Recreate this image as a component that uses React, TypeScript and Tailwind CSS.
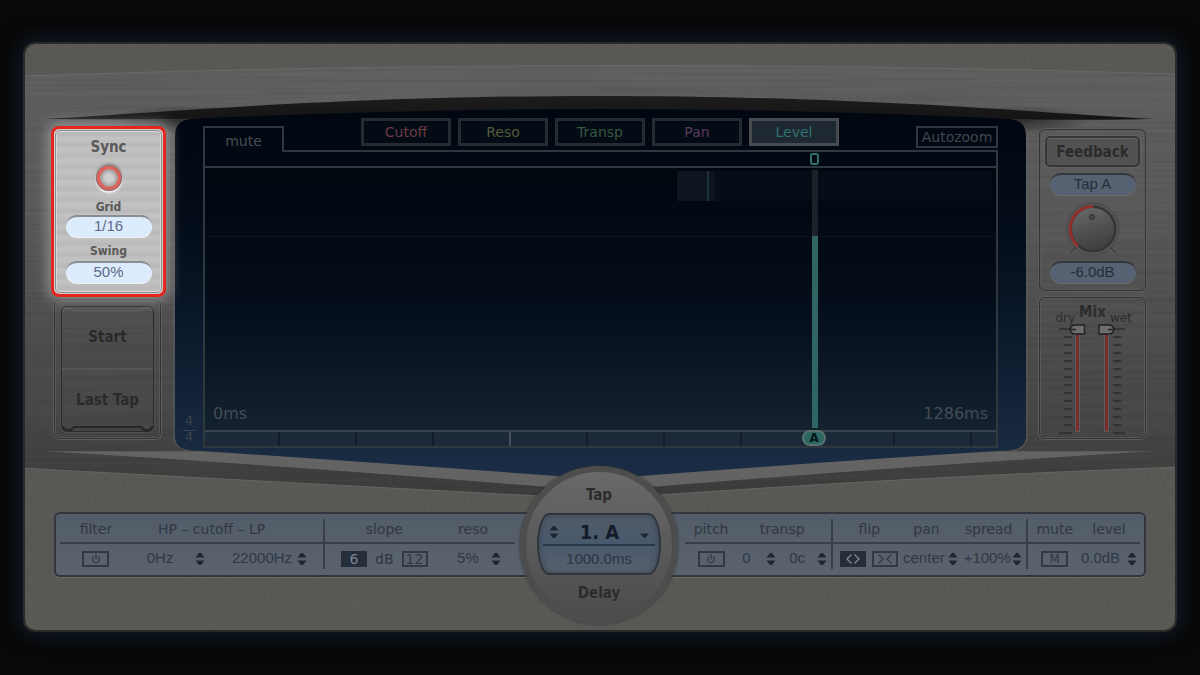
import { useState } from 'react'
import type { ReactNode } from 'react'
import clsx from 'clsx'

const tabs = [
  { name: 'Cutoff', color: 'text-[#6b3c42]' },
  { name: 'Reso', color: 'text-[#555a3a]' },
  { name: 'Transp', color: 'text-[#34573f]' },
  { name: 'Pan', color: 'text-[#5c3a5c]' },
  { name: 'Level', color: 'text-[#2f716e]' },
]

const beats = [0, 1, 2, 3, 4, 5, 6, 7, 8, 9]
const sliderTicks = Array.from({ length: 14 }, (_, i) => 6 + i * 8)

const labelFont = "font-['DejaVu_Sans_Condensed','DejaVu_Sans',sans-serif] font-bold"
const lcdFont = "font-['DejaVu_Sans',sans-serif]"
const valueFont = "font-['Liberation_Sans',sans-serif] font-normal"

/* Stone, brushed metal and the curved screen opening */
function Casing() {
  return (
    <svg
      className="absolute inset-0 w-full h-full"
      viewBox="25 44 1150 587"
      preserveAspectRatio="none"
      aria-hidden="true"
    >
      <defs>
        <linearGradient id="metal" x1="0" y1="0" x2="0" y2="1">
          <stop offset="0" stopColor="#626262" />
          <stop offset="0.12" stopColor="#5f5f5f" />
          <stop offset="0.35" stopColor="#5b5b5b" />
          <stop offset="0.62" stopColor="#4f4f4f" />
          <stop offset="0.8" stopColor="#494949" />
          <stop offset="0.9" stopColor="#424243" />
          <stop offset="1" stopColor="#3c3c3d" />
        </linearGradient>
        <linearGradient id="screen" x1="0" y1="0" x2="0" y2="1">
          <stop offset="0" stopColor="#010710" />
          <stop offset="0.3" stopColor="#030c18" />
          <stop offset="0.6" stopColor="#0b192b" />
          <stop offset="0.9" stopColor="#18293f" />
          <stop offset="1" stopColor="#1b2d46" />
        </linearGradient>
        <linearGradient id="arch" x1="0" y1="0" x2="0" y2="1">
          <stop offset="0" stopColor="#1d1d1d" />
          <stop offset="1" stopColor="#141414" />
        </linearGradient>
        <radialGradient id="shade">
          <stop offset="0" stopColor="#000" stopOpacity="0.5" />
          <stop offset="1" stopColor="#000" stopOpacity="0" />
        </radialGradient>
        <filter id="grain" x="0" y="0" width="1" height="1">
          <feTurbulence type="fractalNoise" baseFrequency="0.3" numOctaves="2" seed="4" />
          <feColorMatrix values="0 0 0 0 0  0 0 0 0 0  0 0 0 0 0  1 0 0 0 -0.3" />
        </filter>
        <filter id="brushed" x="0" y="0" width="1" height="1">
          <feTurbulence type="fractalNoise" baseFrequency="0.004 0.3" numOctaves="2" seed="9" />
          <feColorMatrix values="0 0 0 0 0  0 0 0 0 0  0 0 0 0 0  1.5 0 0 0 -0.5" />
        </filter>
        <clipPath id="metalClip">
          <path d="M25,76 Q600,56 1175,74 V468 Q900,478 600,500 Q300,484 25,469 Z" />
        </clipPath>
      </defs>
      <rect x="25" y="44" width="1150" height="587" fill="#5b5a57" />
      <rect x="25" y="44" width="1150" height="587" filter="url(#grain)" opacity="0.08" />
      <g clipPath="url(#metalClip)">
        <rect x="25" y="56" width="1150" height="450" fill="url(#metal)" />
        <rect x="25" y="56" width="1150" height="450" filter="url(#brushed)" opacity="0.1" />
        <ellipse cx="180" cy="120" rx="70" ry="14" fill="url(#shade)" />
        <ellipse cx="1021" cy="120" rx="70" ry="14" fill="url(#shade)" />
      </g>
      <path d="M25,76 Q600,56 1175,74" fill="none" stroke="#696969" />
      <path d="M25,469 Q300,484 600,500 Q900,478 1175,468" fill="none" stroke="#65645f" />
      <path
        d="M46,119 C150,114 330,96 600,96 C870,96 1050,114 1153,119 Q1100,121 1010,119 H190 Q90,120 46,119 Z"
        fill="url(#arch)"
      />
      <path d="M46,452 H1153 Q900,467 600,492 Q300,467 46,452 Z" fill="#636363" />
      <path
        d="M175,136 Q175,120 192,119 Q400,109 600,109 Q800,109 1009,119 Q1026,120 1026,136 V438 Q1025,450 1010,451 Q800,464 600,480 Q400,465 190,451 Q176,450 175,438 Z"
        fill="url(#screen)"
      />
      <path
        d="M174,136 V438 Q175,450 190,452 M1027,136 V438 Q1026,450 1010,452"
        fill="none"
        stroke="#6a6a6a"
        strokeOpacity="0.6"
      />
    </svg>
  )
}

function Pill({ children, lit }: { children: ReactNode; lit?: boolean }) {
  return (
    <div
      className={clsx(
        'w-[86px] h-[22px] pb-0.5 rounded-full overflow-hidden border-t-2 flex items-center justify-center',
        lit
          ? 'bg-[#dcecfd] border-[#8b8d94] text-[#5d6a86] shadow-[0_1px_0_#f2f2f2]'
          : 'bg-[#566171] border-[#34373c] text-[#262e3c] shadow-[0_1px_0_#6c6c6c]'
      )}
    >
      {children}
    </div>
  )
}

const pillField = clsx(
  valueFont,
  'w-full h-5 shrink-0 bg-transparent text-center text-[15px] leading-5 appearance-none outline-none [text-align-last:center]'
)

function Stepper() {
  return (
    <svg className="w-[10px] h-[14px] shrink-0" viewBox="0 0 10 14" fill="#1f2632" aria-hidden="true">
      <path d="M0.5 5.5 L4 1 H6 L9.5 5.5 Z M0.5 8.5 H9.5 L6 13 H4 Z" />
    </svg>
  )
}

function PowerButton({ label }: { label: string }) {
  return (
    <button aria-label={label} className="w-[27px] h-4 border-2 border-[#303946] flex items-center justify-center">
      <svg className="w-[10px] h-[10px]" viewBox="0 0 10 10" fill="none" stroke="#303946" strokeWidth="1.2" aria-hidden="true">
        <path d="M3 2.6 A3.4 3.4 0 1 0 7 2.6 M5 0 V5.5" />
      </svg>
    </button>
  )
}

function Head({ children, className, htmlFor }: { children: ReactNode; className?: string; htmlFor?: string }) {
  return (
    <div
      className={clsx(
        'h-[25px] pb-0.5 border-b-2 border-[#373f4b] flex items-center justify-center text-sm leading-4 whitespace-pre text-[#303742]',
        lcdFont,
        className
      )}
    >
      {htmlFor ? <label htmlFor={htmlFor}>{children}</label> : <span>{children}</span>}
    </div>
  )
}

function Cell({ children, className }: { children: ReactNode; className?: string }) {
  return <div className={clsx('h-[25px] pt-1.5 flex items-center justify-center', className)}>{children}</div>
}

function Value({ id, value, className, label }: { id?: string; value: string; className: string; label?: string }) {
  return (
    <input
      id={id}
      aria-label={label}
      defaultValue={value}
      className={clsx('h-5 bg-transparent pb-[3px] text-[15px] leading-4 text-[#303846] outline-none', valueFont, className)}
    />
  )
}

const divider = 'border-l-2 border-l-[#373f4b]'
const lcdBar =
  'flex-1 min-w-0 h-[65px] pt-[5px] mb-0.5 bg-linear-to-b from-[#535d69] to-[#5a636d] border-y-2 border-[#33373d] shadow-[0_1px_0_#6a6965]'

function FilterBar() {
  return (
    <div className={clsx(lcdBar, 'rounded-l-md border-l-2 pl-1 pr-[25px]')}>
      <div className="grid grid-cols-[72fr_88fr_104fr_120fr_72fr]">
        <Head>filter</Head>
        <Head className="col-span-2 pr-8">HP – cutoff – LP</Head>
        <Head className={divider}>slope</Head>
        <Head className="pr-3" htmlFor="reso">reso</Head>
        <Cell><PowerButton label="filter" /></Cell>
        <Cell className="gap-5">
          <Value label="HP cutoff" value="0Hz" className="w-7" />
          <Stepper />
        </Cell>
        <Cell className="gap-1 pr-1">
          <Value label="LP cutoff" value="22000Hz" className="w-[61px]" />
          <Stepper />
        </Cell>
        <Cell className={clsx(divider, lcdFont, 'gap-2 text-sm leading-4 text-[#303742]')}>
          <button className="w-[26px] h-4 bg-[#262e3a] text-[#7a8694] leading-4">6</button>
          <span>dB</span>
          <button className="w-[26px] h-4 border-2 border-[#303946] leading-3">12</button>
        </Cell>
        <Cell className="gap-2.5">
          <Value id="reso" value="5%" className="w-6" />
          <Stepper />
        </Cell>
      </div>
    </div>
  )
}

function OutputBar() {
  return (
    <div className={clsx(lcdBar, 'rounded-r-md border-r-2 pr-1 pl-[27px]')}>
      <div className="grid grid-cols-[52fr_44fr_50fr_70fr_58fr_66fr_52fr_62fr]">
        <Head>pitch</Head>
        <Head className="col-span-2 pr-1" htmlFor="transp">transp</Head>
        <Head className={clsx(divider, 'pl-1')}>flip</Head>
        <Head className="pr-2" htmlFor="pan">pan</Head>
        <Head className="pr-2" htmlFor="spread">spread</Head>
        <Head className={clsx(divider, 'pl-1')}>mute</Head>
        <Head htmlFor="level">level</Head>
        <Cell><PowerButton label="pitch" /></Cell>
        <Cell className="gap-3.5">
          <Value id="transp" value="0" className="w-[10px]" />
          <Stepper />
        </Cell>
        <Cell className="gap-2.5 pl-1">
          <Value label="transp cents" value="0c" className="w-[18px]" />
          <Stepper />
        </Cell>
        <Cell className={clsx(divider, 'gap-1.5 pl-1')}>
          <button aria-label="flip off" className="w-[26px] h-4 bg-[#262e3a] flex items-center justify-center">
            <svg className="w-4 h-3" viewBox="0 0 16 12" fill="none" stroke="#7a8694" strokeWidth="1.4" aria-hidden="true">
              <path d="M6.5 1.5 L2 6 L6.5 10.5 M9.5 1.5 L14 6 L9.5 10.5" />
            </svg>
          </button>
          <button aria-label="flip on" className="w-[26px] h-4 border-2 border-[#303946] flex items-center justify-center">
            <svg className="w-4 h-3" viewBox="0 0 16 12" fill="none" stroke="#303946" strokeWidth="1.2" aria-hidden="true">
              <path d="M1.5 1.5 L6 6 L1.5 10.5 M14.5 1.5 L10 6 L14.5 10.5" />
            </svg>
          </button>
        </Cell>
        <Cell className="gap-0.5">
          <Value id="pan" value="center" className="w-[43px]" />
          <Stepper />
        </Cell>
        <Cell>
          <Value id="spread" value="+100%" className="w-[48px]" />
          <Stepper />
        </Cell>
        <Cell className={clsx(divider, 'pl-1')}>
          <button className={clsx('w-[27px] h-4 border-2 border-[#303946] text-xs leading-3 text-[#303742]', lcdFont)}>M</button>
        </Cell>
        <Cell className="gap-1.5">
          <Value id="level" value="0.0dB" className="w-10" />
          <Stepper />
        </Cell>
      </div>
    </div>
  )
}

function TapDial() {
  return (
    <div
      className={clsx(
        'relative z-10 -mx-5 size-[158px] shrink-0 rounded-full border-[6px] border-[#4d4d4d] bg-linear-to-b from-[#696969] to-[#4c4c4c] shadow-[0_0_3px_#2e2e2e] flex flex-col items-center justify-center gap-2 pb-0.5 text-[15px] leading-5 text-[#2c2c2c]',
        labelFont
      )}
    >
      <label htmlFor="tap" className="h-5">Tap</label>
      <div className="w-[124px] h-[62px] px-1 rounded-[12px/31px] border-2 border-[#2f353c] bg-linear-to-b from-[#525c69] via-[#48586c] to-[#59626d] shadow-[inset_0_0_6px_#39434f]">
        <div className="h-[31px] pt-1 px-1.5 flex items-center justify-between border-b-2 border-[#2b3644]">
          <Stepper />
          <select
            id="tap"
            className="appearance-none bg-transparent w-16 h-6 text-xl leading-6 whitespace-pre text-[#141c2a] [text-align-last:center] outline-none"
          >
            <option>1. A</option>
          </select>
          <svg className="w-[9px] h-[5px] mt-2" viewBox="0 0 9 5" fill="#1f2632" aria-hidden="true">
            <path d="M0 0.5 H9 L5.5 4.5 H3.5 Z" />
          </svg>
        </div>
        <input
          id="delay"
          defaultValue="1000.0ms"
          className={clsx('block w-full h-6 bg-transparent text-center text-[15px] leading-5 text-[#2a3444] outline-none', valueFont)}
        />
      </div>
      <label htmlFor="delay" className="h-5">Delay</label>
    </div>
  )
}

function SyncPanel() {
  return (
    <section className="relative z-10 w-[115px] h-[171px] p-px rounded-lg border-[3px] border-[#e5261f] bg-[#cfcfcf] shadow-[0_0_14px_3px_rgba(190,190,190,0.6)]">
      <div
        className={clsx(
          'h-full rounded-[5px] border border-[#8a8a8a] bg-[repeating-linear-gradient(180deg,#bebebe_0px,#b8b8b8_3px,#c3c3c3_7px,#bebebe_11px)] shadow-[inset_0_0_0_1px_#d9d9d9] flex flex-col items-center pt-1.5 text-[#5a5858]',
          labelFont
        )}
      >
        <label htmlFor="sync" className="h-5 text-[15px] leading-5">Sync</label>
        <input
          id="sync"
          type="checkbox"
          defaultChecked
          className="appearance-none mt-2 size-[26px] rounded-full border-[4px] border-[#e06259] bg-radial from-[#cfcfcf] from-30% to-[#7b7676] outline-1 -outline-offset-1 outline-[#7d7777] shadow-[0_2px_2px_#f4f4f4,0_-2px_2px_#999]"
        />
        <label htmlFor="grid" className="mt-2 h-4 text-xs leading-4">Grid</label>
        <div>
          <Pill lit>
            <select id="grid" className={pillField}>
              <option>1/16</option>
            </select>
          </Pill>
        </div>
        <label htmlFor="swing" className="mt-1.5 h-4 text-xs leading-4">Swing</label>
        <div className="mt-0.5">
          <Pill lit>
            <input id="swing" defaultValue="50%" className={pillField} />
          </Pill>
        </div>
      </div>
    </section>
  )
}

const groove = 'rounded-md border border-[#343434] shadow-[0_0_0_1px_#5c5c5c,inset_0_0_0_1px_#585858]'

function TapPad() {
  return (
    <div className={clsx('ml-[3px] mt-0.5 w-[107px] h-[140px] p-1.5', groove)}>
      <div className={clsx('relative h-full rounded-md border border-[#2b2b2b] shadow-[0_0_0_1px_#4f4f4f] flex flex-col text-[15px] leading-5 text-[#2a2a2a]', labelFont)}>
        <svg className="absolute inset-0 w-full h-full" viewBox="0 0 93 126" preserveAspectRatio="none" fill="none" aria-hidden="true">
          <path d="M1 5 Q1 1 5 1 H9 L12 4 H81 L84 1 H88 Q92 1 92 5" stroke="#626262" />
          <path d="M1 121 Q1 125 5 125 H9 L12 122 H81 L84 125 H88 Q92 125 92 121" stroke="#262626" strokeWidth="2" />
        </svg>
        <button className="relative flex-1 pb-0.5 border-b-2 border-[#565656]">Start</button>
        <button className="relative flex-1 pb-0.5">Last Tap</button>
      </div>
    </div>
  )
}

function Graph() {
  const [active, setActive] = useState('Level')

  return (
    <section className="flex pt-[74px]">
      <div className={clsx('w-7 shrink-0 pt-[295px] pl-2 text-[13px] leading-4 text-[#3a4553]', lcdFont)}>
        <div className="w-3 h-[18px] text-center border-b border-[#3a4553]">4</div>
        <div className="w-3 leading-3 text-center">4</div>
      </div>

      <div className={clsx('flex-1 min-w-0', lcdFont)}>
        <div className="flex h-[34px]">
          <button className="mt-2 w-[81px] h-[26px] pt-0.5 border-2 border-b-0 border-[#2e363f] text-sm leading-5 text-[#474e57]">
            mute
          </button>
          <div className="flex-1 flex items-start justify-between pl-[77px] border-b-2 border-[#2e363f] text-sm leading-5">
            <div className="flex gap-2">
              {tabs.map((tab) => (
                <button
                  key={tab.name}
                  onClick={() => setActive(tab.name)}
                  className={clsx(
                    'w-[90px] h-7 -mr-px border-[3px]',
                    tab.color,
                    active === tab.name ? 'border-[#474b50] bg-[#1e2833]' : 'border-[#262b32] bg-[#030b15]'
                  )}
                >
                  {tab.name}
                </button>
              ))}
            </div>
            <button className="mt-2 w-[82px] h-[22px] border-2 border-[#2e363f] leading-4 text-[#40474f]">Autozoom</button>
          </div>
        </div>

        <div className="relative border-2 border-t-0 border-[#30383f]">
          <div className="h-4 border-b-2 border-[#30383f] bg-[#010811]" />

          {/* Tap display */}
          <div className="relative h-[262px] bg-linear-to-b from-[#01070f] via-[#040d19] to-[#14212f]">
            <div className="absolute top-[3px] right-1 w-[315px] h-[30px] bg-[#070d17]">
              <div className="w-[38px] h-full bg-[#0d151f] pl-[30px]">
                <div className="w-0.5 h-full bg-[#1c3138]" />
              </div>
            </div>
            <div className="absolute inset-x-0 top-[68px] h-px bg-[#09151f]" />
            <div className="absolute left-2 bottom-1 text-base leading-6 text-[#444c55]">0ms</div>
            <div className="absolute right-2 bottom-1 text-base leading-6 text-[#444c55]">1286ms</div>
            <div className="absolute left-[77%] -ml-0.5 top-0.5 bottom-0.5 w-1.5 flex flex-col">
              <div className="h-[66px] bg-[#1d2129]" />
              <div className="flex-1 bg-[#2f6663]" />
            </div>
          </div>

          {/* Beat ruler */}
          <div className="relative h-4 border-t-2 border-[#39424c] bg-[#1b2939]">
            {beats.map((beat) => (
              <div
                key={beat}
                className={clsx('absolute inset-y-0 w-0.5', beat === 3 ? 'bg-[#46505a]' : 'bg-[#131d29]')}
                style={{ left: `${9.2 + beat * 9.73}%` }}
              />
            ))}
          </div>

          <div className="absolute top-px left-[77%] -ml-1 w-[9px] h-3 rounded-[3px] border-2 border-[#2f706d]" />
          <button className="absolute bottom-0 left-[77%] -ml-3 w-6 h-4 rounded-full border-2 border-[#56716f] bg-[#2c6661] text-xs leading-3 font-bold text-[#08161d]">
            A
          </button>
        </div>
      </div>

      <div className="w-7 shrink-0" />
    </section>
  )
}

function FeedbackPanel() {
  return (
    <section className={clsx('w-[107px] h-[162px] flex flex-col items-center pt-1.5', groove)}>
      <button
        className={clsx(
          'w-[95px] h-[31px] rounded-[5px] border-2 border-[#363636] bg-[#525252] shadow-[0_0_0_1px_#626262,inset_0_1px_0_#666] text-[15px] leading-5 text-[#2b2b2b]',
          labelFont
        )}
      >
        Feedback
      </button>
      <div className="mt-1.5">
        <Pill>
          <select aria-label="Feedback tap" className={pillField}>
            <option>Tap A</option>
          </select>
        </Pill>
      </div>
      <div className="relative w-16 h-[60px] mt-1.5">
        <svg className="w-16 h-[60px]" viewBox="0 0 64 60" aria-hidden="true">
          <defs>
            <linearGradient id="knob" x1="0" y1="0" x2="0.3" y2="1">
              <stop offset="0" stopColor="#6a6a6a" />
              <stop offset="1" stopColor="#404040" />
            </linearGradient>
          </defs>
          <circle cx="32" cy="28" r="26" fill="#555" stroke="#484848" />
          <path d="M15 46 L9 52 M49 46 L55 52" stroke="#333" />
          <circle cx="32" cy="28" r="23.5" fill="#353535" />
          <path d="M17 45 A22.5 22.5 0 0 1 32 5.5" fill="none" stroke="#932f2b" strokeWidth="3" />
          <circle cx="32" cy="28" r="21" fill="url(#knob)" />
          <circle cx="31" cy="16" r="2.5" fill="#4a4a4a" stroke="#2e2e2e" />
        </svg>
        <input type="range" aria-label="Feedback amount" className="absolute inset-0 w-full h-full opacity-0" />
      </div>
      <div>
        <Pill>
          <input aria-label="Feedback level" defaultValue="-6.0dB" className={pillField} />
        </Pill>
      </div>
    </section>
  )
}

function MixPanel() {
  return (
    <section className={clsx('mt-1.5 w-[107px] h-[142px]', groove)}>
      <div className={clsx('h-[25px] flex justify-center gap-1 text-[#2c2c2c]', lcdFont)}>
        <label htmlFor="dry" className="w-5 pt-3 text-xs leading-4 text-right">dry</label>
        <h2 className={clsx('pt-1 text-[15px] leading-5', labelFont)}>Mix</h2>
        <label htmlFor="wet" className="w-5 pt-3 text-xs leading-4">wet</label>
      </div>
      <div className="relative h-[112px]">
        <svg className="w-[105px] h-[112px]" viewBox="0 0 105 112" aria-hidden="true">
          {sliderTicks.map((y, i) => {
            const wide = i === 0 || i === 13
            return (
              <path
                key={y}
                d={wide ? `M19 ${y} H32 M73 ${y} H85` : `M24 ${y} H32 M73 ${y} H81`}
                stroke="#2d2d2d"
                strokeWidth="1.3"
              />
            )
          })}
          <path d="M37.5 10 V109 M66.5 10 V109" stroke="#5c5c5c" strokeWidth="5" />
          <path d="M37.5 10 V108 M66.5 10 V108" stroke="#782d2a" strokeWidth="3" />
          <path
            d="M30 6.5 Q31 2 35 2 H44.5 V11 H35 Q31 11 30 6.5 Z M74 6.5 Q73 2 69 2 H59 V11 H69 Q73 11 74 6.5 Z"
            fill="#6e6e6e"
            stroke="#222"
            strokeWidth="1.5"
          />
          <path d="M30 6.5 H36 M74 6.5 H68" stroke="#222" strokeWidth="1.3" />
        </svg>
        <input
          id="dry"
          type="range"
          defaultValue={100}
          className="absolute left-7 top-0 w-5 h-full opacity-0 [writing-mode:vertical-lr] [direction:rtl]"
        />
        <input
          id="wet"
          type="range"
          defaultValue={100}
          className="absolute right-7 top-0 w-5 h-full opacity-0 [writing-mode:vertical-lr] [direction:rtl]"
        />
      </div>
    </section>
  )
}

export default function App() {
  return (
    <main className="min-h-screen bg-[#080808] px-[23px] py-[42px]">
      <div className="relative rounded-xl border-2 border-[#29292b] overflow-clip shadow-[0_0_18px_3px_#101c2b]">
        <Casing />
        <div className="relative">
          <div className="grid grid-cols-[150fr_851fr_149fr] pb-[18px]">
            <aside className="pt-[82px] pl-[26px]">
              <SyncPanel />
              <TapPad />
            </aside>
            <Graph />
            <aside className="pt-[85px] pl-[13px]">
              <FeedbackPanel />
              <MixPanel />
            </aside>
          </div>

          {/* Parameter bar */}
          <div className="mx-[29px] pb-1.5 flex items-center">
            <FilterBar />
            <TapDial />
            <OutputBar />
          </div>
        </div>
      </div>
    </main>
  )
}
